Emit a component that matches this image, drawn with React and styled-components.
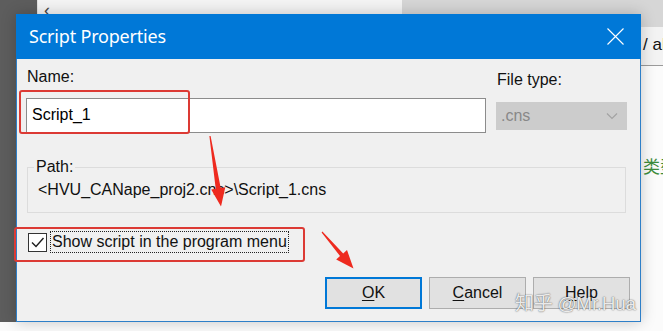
import styled, { createGlobalStyle } from "styled-components";

const GlobalStyle = createGlobalStyle`
  html, body {
    margin: 0;
    padding: 0;
    background: #fbfbfb;
  }
  body {
    font-family: "Liberation Sans", Arial, sans-serif;
  }
`;

export default function App() {
  return (
    <>
      <GlobalStyle />
      <Screen>
        <Backdrop>
          <LeftTop>
            <Tab />
          </LeftTop>
          <VLine $row="1 / 4" />
          <Toolbar>
            <Crumb>‹</Crumb>
            <ToolbarRest />
          </Toolbar>
          <RightTop />
          <LeftBody $row="2 / 4" />
          <MainBody $row="2 / 4" />
          <RightHeader>
            / a<Orange>l</Orange>
          </RightHeader>
          <RightBody>类型</RightBody>
          <BottomLeft />
          <BottomMain>
            <Hatch />
            <Dotted />
          </BottomMain>
          <BottomRight />
        </Backdrop>

        <Dialog>
          <TitleBar>
            <Title>Script Properties</Title>
            <CloseIcon viewBox="0 0 17 17">
              <path d="M0.5 0.5 L16.5 16.5 M16.5 0.5 L0.5 16.5" />
            </CloseIcon>
          </TitleBar>
          <Body>
            <TopGrid>
              <Field>
                <Label>Name:</Label>
                <NameInput>Script_1</NameInput>
              </Field>
              <Field $shift>
                <Label>File type:</Label>
                <Select>
                  <span>.cns</span>
                  <svg width="12" height="8" viewBox="0 0 12 8">
                    <path d="M1 1.5 L6 6.5 L11 1.5" fill="none" stroke="#a3a3a3" strokeWidth="1.2" />
                  </svg>
                </Select>
              </Field>
            </TopGrid>
            <PathGroup>
              <legend>Path:</legend>
              <PathText>&lt;HVU_CANape_proj2.cnc&gt;\Script_1.cns</PathText>
            </PathGroup>
            <CheckRow>
              <Check>
                <svg width="17" height="17" viewBox="0 0 17 17">
                  <path d="M3 8.5 L7 12.5 L14.5 4" fill="none" stroke="#1d1d1d" strokeWidth="1.4" />
                </svg>
              </Check>
              <FocusLabel>Show script in the program menu</FocusLabel>
            </CheckRow>
            <ButtonRow>
              <DialogButton $primary>
                <u>O</u>K
              </DialogButton>
              <DialogButton>
                <u>C</u>ancel
              </DialogButton>
              <DialogButton>
                <u>H</u>elp
              </DialogButton>
            </ButtonRow>
          </Body>
        </Dialog>

        <Highlight $x={19} $y={90} $w={171} $h={44} />
        <Highlight $x={14} $y={227} $w={291} $h={35} />

        <Arrows viewBox="0 0 663 331" width="663" height="331">
          <polygon points="209.4,136.1 210.6,135.9 220.7,188 225.3,187.3 221,206.5 211.2,189.5 215.7,188.8" />
          <polygon points="321.6,232.4 322.4,231.6 343.2,253.4 347,250 353.5,268.5 336.2,259.4 340,256" />
        </Arrows>

        <Watermark>知乎 @Mr.Hua</Watermark>
      </Screen>
    </>
  );
}

const Screen = styled.div`
  position: relative;
  width: 663px;
  height: 331px;
  overflow: hidden;
  background: #fbfbfb;
`;

/* the application window behind the dialog */
const Backdrop = styled.div`
  display: grid;
  grid-template-columns: 37px 1px 603px 22px;
  grid-template-rows: 27px 39px 256px 9px;
  width: 663px;
  height: 331px;
`;

const LeftTop = styled.div`
  background: #ffffff;
`;

const Tab = styled.div`
  width: 33px;
  height: 25px;
  background: #e2e2e2;
`;

const VLine = styled.div`
  grid-row: ${(p) => p.$row};
  background: #5d5d5d;
`;

const Toolbar = styled.div`
  display: flex;
`;

const Crumb = styled.div`
  width: 364px;
  background: #f4f4f4;
  color: #444;
  font-size: 18px;
  line-height: 20px;
  padding-left: 6px;
  box-sizing: border-box;
`;

const ToolbarRest = styled.div`
  flex: 1;
  background: #d6d6d6;
`;

const RightTop = styled.div`
  background: #d6d6d6;
`;

const LeftBody = styled.div`
  grid-row: ${(p) => p.$row};
  background: #fbfbfb;
`;

const MainBody = styled.div`
  grid-row: ${(p) => p.$row};
  background: #ffffff;
`;

const RightHeader = styled.div`
  background: #f3f3f3;
  border-bottom: 1px solid #9b9b9b;
  font-size: 17px;
  line-height: 36px;
  padding-left: 2px;
  white-space: nowrap;
  color: #111;
`;

const Orange = styled.span`
  color: #d9822b;
`;

const RightBody = styled.div`
  background: #fbfbfb;
  padding-top: 87px;
  padding-left: 2px;
  font-family: "Noto Sans CJK SC", sans-serif;
  font-size: 17px;
  color: #3c8c3c;
  white-space: nowrap;
  overflow: hidden;
`;

const BottomLeft = styled.div`
  background: #fbfbfb;
`;

const BottomMain = styled.div`
  display: flex;
  background: #fbfbfb;
`;

const Hatch = styled.div`
  width: 24px;
  background: repeating-linear-gradient(45deg, #bdbdbd 0 1px, #e4e4e4 1px 2px);
`;

const Dotted = styled.div`
  margin-left: 41px;
  border-left: 1px dotted #555;
`;

const BottomRight = styled.div`
  background: #fbfbfb;
`;

/* dialog window */
const Dialog = styled.div`
  position: absolute;
  left: 16px;
  top: 14px;
  width: 625px;
  height: 308px;
  box-sizing: border-box;
  border: 1px solid #2e7fc8;
  border-top: none;
  background: #f0f0f0;
  box-shadow: 0 0 14px rgba(0, 0, 0, 0.22);
  display: flex;
  flex-direction: column;
`;

const TitleBar = styled.div`
  height: 45px;
  margin: 0 -1px;
  background: #0078d7;
  display: flex;
  align-items: center;
  justify-content: space-between;
  padding: 0 17px 0 13px;
`;

const Title = styled.div`
  font-family: "Noto Sans", sans-serif;
  font-size: 18px;
  color: #ffffff;
  letter-spacing: -0.2px;
  margin-top: -1px;
`;

const CloseIcon = styled.svg`
  width: 17px;
  height: 17px;
  stroke: #ffffff;
  stroke-width: 1.1;
  fill: none;
`;

const Body = styled.div`
  flex: 1;
  padding: 9px 13px 0 9px;
  display: flex;
  flex-direction: column;
  font-size: 16px;
  color: #000;
`;

const TopGrid = styled.div`
  display: grid;
  grid-template-columns: 460px 131px;
  gap: 10px;
`;

const Field = styled.div`
  display: flex;
  flex-direction: column;
  padding-top: ${(p) => (p.$shift ? "3px" : "0")};
  gap: ${(p) => (p.$shift ? "13px" : "12px")};
`;

const Label = styled.div`
  line-height: 18px;
  padding-left: 1px;
  color: #111;
`;

const NameInput = styled.div`
  height: 35px;
  box-sizing: border-box;
  border: 1px solid #8c8c8c;
  background: #ffffff;
  padding-left: 5px;
  line-height: 31px;
`;

const Select = styled.div`
  height: 28px;
  box-sizing: border-box;
  background: #cccccc;
  display: flex;
  align-items: center;
  justify-content: space-between;
  padding: 0 9px 0 5px;
  color: #888888;
`;

const PathGroup = styled.fieldset`
  margin: 25px 1px 0;
  padding: 5px 10px 13px;
  border: 1px solid #dcdcdc;
  min-width: 0;

  legend {
    padding: 0 2px;
    margin-left: -4px;
    line-height: 18px;
    color: #111;
  }
`;

const PathText = styled.div`
  line-height: 18px;
  color: #111;
`;

const CheckRow = styled.div`
  display: flex;
  align-items: center;
  margin-top: 19px;
  padding-left: 2px;
  height: 20px;
`;

const Check = styled.div`
  width: 19px;
  height: 19px;
  box-sizing: border-box;
  border: 1px solid #333333;
  background: #ffffff;
  display: flex;
  align-items: center;
  justify-content: center;
`;

const FocusLabel = styled.span`
  margin-left: 4px;
  padding: 0 1px;
  outline: 1px dotted #222;
  line-height: 20px;
  color: #111;
`;

const ButtonRow = styled.div`
  display: flex;
  justify-content: flex-end;
  gap: 7px;
  margin-top: 25px;
  margin-right: -3px;
`;

const DialogButton = styled.div`
  width: 97px;
  height: 32px;
  box-sizing: border-box;
  background: #e1e1e1;
  border: ${(p) => (p.$primary ? "2px solid #0078d7" : "1px solid #adadad")};
  display: flex;
  align-items: center;
  justify-content: center;
  color: #111;

  u {
    text-decoration-thickness: 1px;
    text-underline-offset: 2px;
  }
`;

/* annotation overlays */
const Highlight = styled.div`
  position: absolute;
  left: ${(p) => p.$x}px;
  top: ${(p) => p.$y}px;
  width: ${(p) => p.$w}px;
  height: ${(p) => p.$h}px;
  box-sizing: border-box;
  border: 2px solid #dc3a34;
  border-radius: 3px;
`;

const Arrows = styled.svg`
  position: absolute;
  left: 0;
  top: 0;
  pointer-events: none;
  fill: #ee2a1f;
`;

const Watermark = styled.div`
  position: absolute;
  left: 515px;
  top: 288px;
  font-family: "Liberation Sans", "Noto Sans CJK SC", sans-serif;
  font-size: 19px;
  white-space: nowrap;
  color: rgba(255, 255, 255, 0.9);
  text-shadow: 0 0 1px rgba(0, 0, 0, 0.55), 0 0 2px rgba(0, 0, 0, 0.35);
  letter-spacing: -0.3px;
`;
